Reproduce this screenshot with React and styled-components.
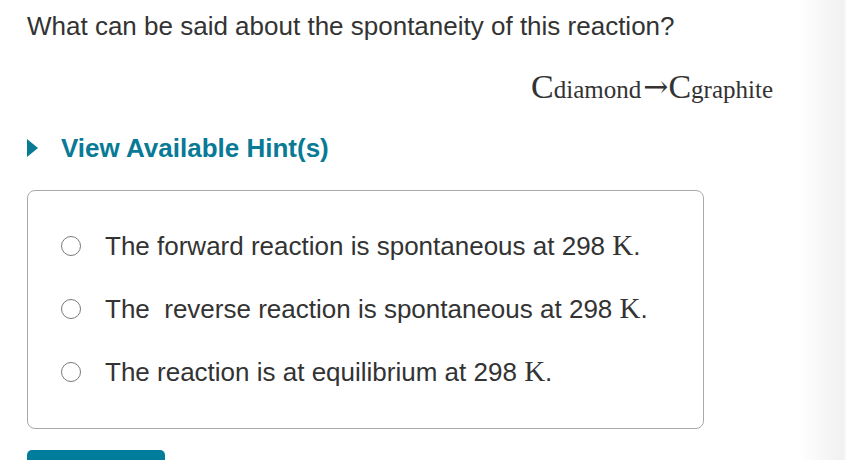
import React from 'react';
import styled, { createGlobalStyle } from 'styled-components';

const Global = createGlobalStyle`
  html, body {
    margin: 0;
    padding: 0;
  }
  body {
    font-family: "Liberation Sans", Arial, sans-serif;
    color: #333;
    background: linear-gradient(to right, #fff 0, #fff 798px, #f1f1f1 843px, #fafafa 846px);
    min-height: 460px;
  }
`;

const Page = styled.div`
  padding: 9px 0 0 27px;
  height: 460px;
  box-sizing: border-box;
  overflow: hidden;
`;

const Question = styled.p`
  margin: 0;
  font-size: 26px;
  line-height: 34px;
`;

const Equation = styled.div`
  display: flex;
  justify-content: flex-end;
  align-items: baseline;
  margin: 26px 73px 0 0;
  font-family: "Liberation Serif", "DejaVu Serif", serif;
  color: #333;
`;

const Big = styled.span`
  font-size: 34px;
  line-height: 36px;
`;

const Sub = styled.sub`
  font-size: 25px;
  vertical-align: -5px;
  line-height: 1;
`;

const Arrow = styled.span`
  font-family: "DejaVu Serif", serif;
  font-size: 30px;
  margin: 0 0 0 2px;
  transform: translateY(-1px);
`;

const HintToggle = styled.button`
  display: flex;
  align-items: center;
  gap: 23px;
  margin: 27px 0 0;
  padding: 0;
  border: none;
  background: none;
  color: #087a96;
  font-family: "Liberation Sans", Arial, sans-serif;
  font-weight: bold;
  font-size: 26px;
  line-height: 32px;
  cursor: pointer;
`;

const Caret = styled.span`
  width: 0;
  height: 0;
  border-top: 9px solid transparent;
  border-bottom: 9px solid transparent;
  border-left: 11px solid #087a96;
`;

const Choices = styled.div`
  margin-top: 26px;
  width: 677px;
  height: 239px;
  box-sizing: border-box;
  border: 1.5px solid #a9a9a9;
  border-radius: 8px;
  padding: 38px 0 0 33px;
  display: flex;
  flex-direction: column;
  gap: 29px;
`;

const Choice = styled.label`
  display: flex;
  align-items: center;
  gap: 24px;
  font-size: 26px;
  line-height: 34px;
  height: 34px;
  color: #333;
`;

const Radio = styled.span`
  width: 18px;
  height: 18px;
  border: 1.5px solid #7a7a7a;
  border-radius: 50%;
  flex: none;
`;

const Unit = styled.span`
  font-family: "Liberation Serif", "DejaVu Serif", serif;
  font-size: 29px;
  line-height: 1;
`;

const Submit = styled.button`
  display: block;
  margin-top: 21px;
  width: 138px;
  height: 40px;
  border: none;
  border-radius: 5px;
  background: #027c9b;
`;

const options = [
  'The forward reaction is spontaneous at 298 ',
  'The  reverse reaction is spontaneous at 298 ',
  'The reaction is at equilibrium at 298 ',
];

export default function App() {
  return (
    <>
      <Global />
      <Page>
        <Question>What can be said about the spontaneity of this reaction?</Question>
        <Equation>
          <Big>C</Big>
          <Sub>diamond</Sub>
          <Arrow>→</Arrow>
          <Big>C</Big>
          <Sub>graphite</Sub>
        </Equation>
        <HintToggle>
          <Caret />
          View Available Hint(s)
        </HintToggle>
        <Choices>
          {options.map((text) => (
            <Choice key={text}>
              <Radio />
              <span style={{ whiteSpace: 'pre' }}>
                {text}
                <Unit>K</Unit>.
              </span>
            </Choice>
          ))}
        </Choices>
        <Submit />
      </Page>
    </>
  );
}
